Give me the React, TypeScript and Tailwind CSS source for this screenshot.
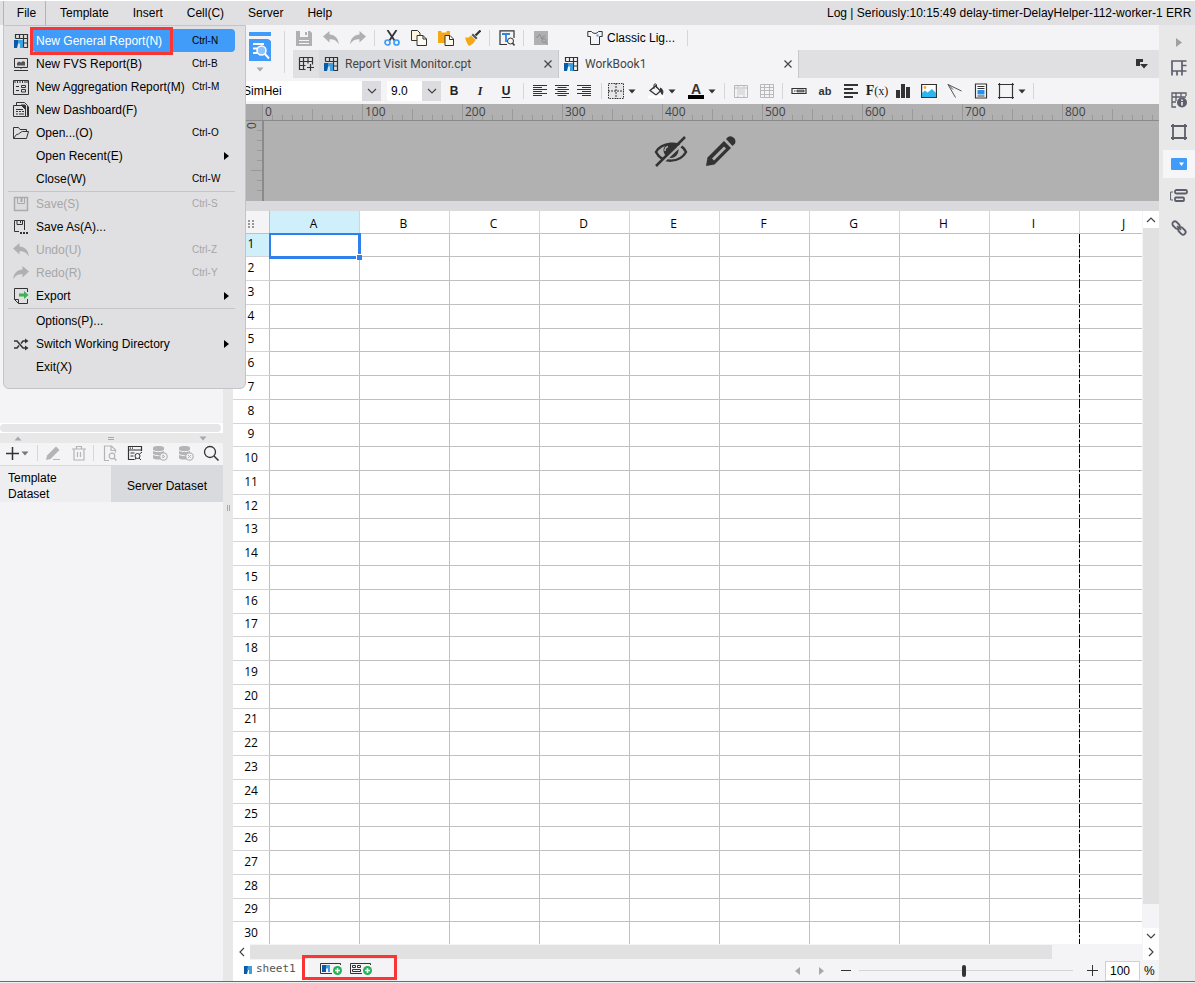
import { useState } from 'react';
import type { ReactNode } from 'react';

const Icon = ({ size = 16, className = '', children }: any) => (
  <svg
    width={size}
    height={size}
    viewBox="0 0 16 16"
    fill="none"
    stroke="#333"
    className={`shrink-0 ${className}`}
    aria-hidden="true"
  >
    {children}
  </svg>
);

/* ---------- shared icons ---------- */

const ReportIcon = () => (
  <Icon>
    <path d="M2.500 5.500v-4h12v13h-4M2.500 5.500h12M6.500 1.500v4M10.500 1.500v13M10.500 10h4" strokeWidth="1.200" />
    <path d="M1 7h4v4l-1 4H1z" fill="#0b5aa8" stroke="none" />
    <path d="M5 7h5v8H7v-4.500H5z" fill="#3aa0e0" stroke="none" />
  </Icon>
);

const SaveIcon = ({ color = '#b0b0b2' }: any) => (
  <Icon>
    <path d="M0 1h14l2 2v13H0z" fill={color} stroke="none" />
    <path d="M4 1h8v6H4z" fill="#f4f4f6" stroke="none" />
    <path d="M9 2h2v3H9z" fill={color} stroke="none" />
    <path d="M3 10.500h10M3 13.500h10" stroke="#f4f4f6" />
  </Icon>
);

const UndoIcon = () => (
  <Icon>
    <path d="M0 6.500 6.500 1v3.500c5 .3 9 3.500 9.300 10C13.500 10.500 11 9.300 6.500 9.300V12.500z" fill="#b0b0b2" stroke="none" />
  </Icon>
);

const RedoIcon = () => (
  <Icon>
    <path d="M16 6.500 9.500 1v3.500C4.500 4.800.5 8 .2 14.500 2.500 10.500 5 9.300 9.500 9.300V12.500z" fill="#b0b0b2" stroke="none" />
  </Icon>
);

const Caret = ({ className = 'text-[#333]' }: any) => (
  <svg width="8" height="5" viewBox="0 0 8 5" className={`shrink-0 ${className}`} aria-hidden="true">
    <path d="M.5.5h7L4 4.500z" fill="currentColor" />
  </svg>
);

const Chevron = ({ d }: { d: string }) => (
  <svg width="10" height="10" viewBox="0 0 10 10" fill="none" stroke="#444" strokeWidth="1.200" aria-hidden="true">
    <path d={d} />
  </svg>
);

const CHEVRON_DOWN = 'M1 3l4 4 4-4';
const CHEVRON_UP = 'M1 7l4-4 4 4';
const CHEVRON_LEFT = 'M7 1L3 5l4 4';
const CHEVRON_RIGHT = 'M3 1l4 4-4 4';

const Sep = ({ className = '' }: any) => (
  <div className={`w-px shrink-0 bg-[#d6d6da] ${className}`} />
);

const Tool = ({ label, className = 'w-[26px]', children }: any) => (
  <button type="button" aria-label={label} className={`flex h-full shrink-0 items-center justify-center ${className}`}>
    {children}
  </button>
);

/* ---------- menu ---------- */

type MenuEntry = {
  label?: string;
  keys?: string;
  icon?: ReactNode;
  sub?: boolean;
  disabled?: boolean;
  active?: boolean;
  line?: boolean;
};

const fileMenu: MenuEntry[] = [
  { label: 'New General Report(N)', keys: 'Ctrl-N', icon: <ReportIcon />, active: true },
  {
    label: 'New FVS Report(B)',
    keys: 'Ctrl-B',
    icon: (
      <Icon>
        <path d="M1.500 2.500h13v9h-13zM3 11.500c3-.5 4 0 5 .8 1-.8 2-1.300 5-.8M1 14.500h14" />
        <path d="M4 9.500V7l2-1.500 2 1L10 5l2 1v3.500z" fill="#555" stroke="none" />
      </Icon>
    ),
  },
  {
    label: 'New Aggregation Report(M)',
    keys: 'Ctrl-M',
    icon: (
      <Icon>
        <path d="M.5 1.500h15v14H.5z" />
        <path d="M2 1v3M4.500 1v3M7 1v3M9.500 1v3M12 1v3M14 1v3" />
        <path d="M3 7.500h3M3 11.500h3M8.500 6.500h4v2h-4zM8.500 10.500h4v2.500h-4z" />
      </Icon>
    ),
  },
  {
    label: 'New Dashboard(F)',
    icon: (
      <Icon>
        <path d="M3.500 3V.5h8l3 3v10H15M.5 3.500h12v11H.5zM13 14.500h2.500v-10" />
        <path d="M3 7.500h7M3 9.500h2M6 9.500h2M9 9.500h2M3 12h2M6 12h5" strokeWidth="1.200" />
        <path d="M8 3l4 4V3z" fill="#333" />
      </Icon>
    ),
  },
  {
    label: 'Open...(O)',
    keys: 'Ctrl-O',
    icon: (
      <Icon>
        <path d="M.5 13.500v-11h5l1.500 2h6.500v2M.5 13.500l3-4c3 0 4-3 6-3h6l-2 7z" />
      </Icon>
    ),
  },
  { label: 'Open Recent(E)', sub: true },
  { label: 'Close(W)', keys: 'Ctrl-W' },
  { line: true },
  {
    label: 'Save(S)',
    keys: 'Ctrl-S',
    disabled: true,
    icon: (
      <Icon>
        <path d="M1.500 1.500h13v13h-13z" fill="#dcdcde" stroke="#aaa" strokeWidth="1.500" />
        <path d="M4.500 2v5.500h7V2" stroke="#aaa" />
        <path d="M8.500 2v4" stroke="#aaa" strokeWidth="2" />
      </Icon>
    ),
  },
  {
    label: 'Save As(A)...',
    icon: (
      <Icon>
        <path d="M6 12.500H1.500v-11h10V11M4 1.500v4h5.500v-4M7.500 2v2" />
        <path d="M7 14h2M10 14h2M13 14h2" strokeWidth="2" />
      </Icon>
    ),
  },
  { label: 'Undo(U)', keys: 'Ctrl-Z', disabled: true, icon: <UndoIcon /> },
  { label: 'Redo(R)', keys: 'Ctrl-Y', disabled: true, icon: <RedoIcon /> },
  {
    label: 'Export',
    sub: true,
    icon: (
      <Icon>
        <path d="M14.500 4V.5h-13v11l4 4h9V11M1.500 11.500h4v4" />
        <path d="M6 5.500h5V3l4.500 4L11 11V8.500H6z" fill="#3cb05a" stroke="none" />
      </Icon>
    ),
  },
  { line: true },
  { label: 'Options(P)...' },
  {
    label: 'Switch Working Directory',
    sub: true,
    icon: (
      <Icon>
        <path d="M1 5h3l6 7h3M1 12h3l2-2.500M8 7.500L10 5h3" strokeWidth="1.500" />
        <path d="M12 2.500L15.500 5 12 7.500zM12 9.500l3.500 2.500-3.500 2.500z" fill="#333" stroke="none" />
      </Icon>
    ),
  },
  { label: 'Exit(X)' },
];

const FileMenu = () => (
  <div className="absolute top-[25px] left-[3px] z-20 h-[364px] w-[243px] rounded-b-md border border-[#c3c3c9] bg-[#e0e0e2] pt-[3px]">
    {fileMenu.map((item, index) =>
      item.line ? (
        <div key={index} className="mr-2.5 ml-1 h-0.5 border-b border-[#c6c6ca]" />
      ) : (
        <button
          key={index}
          type="button"
          disabled={item.disabled}
          className={`flex h-[23px] w-full items-center pr-2.5 text-left ${item.disabled ? 'text-[#a6a6a8]' : 'text-black'}`}
        >
          <span className="flex w-7 shrink-0 justify-end pr-[3px]">{item.icon}</span>
          <span
            className={`flex h-full grow items-center rounded-sm pl-1 whitespace-nowrap ${item.active ? 'bg-[#409bf9]' : ''}`}
          >
            <span className={`w-[156px] ${item.active ? 'text-white' : ''}`}>{item.label}</span>
            <span className="text-[10px]">{item.keys}</span>
            {item.sub && (
              <svg width="5" height="8" viewBox="0 0 5 8" className="mr-1.5 ml-auto" aria-hidden="true">
                <path d="M0 0l5 4-5 4z" fill="#000" />
              </svg>
            )}
          </span>
        </button>
      ),
    )}
    <div className="absolute top-px left-[26px] h-7 w-[143px] border-3 border-[#fb3434]" />
  </div>
);

const MenuBar = () => (
  <header className="relative flex h-[25px] shrink-0 items-stretch border-t border-white bg-[#e0e0e2] pl-[3px]">
    <button type="button" className="mr-0.5 w-[43px] border-x border-[#b4b4b8] pl-1">
      File
    </button>
    {['Template', 'Insert', 'Cell(C)', 'Server', 'Help'].map((item) => (
      <button key={item} type="button" className="px-3">
        {item}
      </button>
    ))}
    <p className="ml-auto flex w-[368px] items-center whitespace-nowrap">
      Log | Seriously:10:15:49 delay-timer-DelayHelper-112-worker-1 ERR
    </p>
  </header>
);

/* ---------- main toolbar and file tabs ---------- */

const PreviewButton = () => (
  <div className="flex w-[290px] shrink-0 justify-end">
    <button type="button" aria-label="Preview" className="flex w-9 flex-col items-center gap-1.5 pt-[7px]">
      <svg width="22" height="29" viewBox="0 0 22 29" fill="none" aria-hidden="true">
        <path d="M0 0h22v4H0zM0 7h19l3 2v20H0z" fill="#409bf9" />
        <path d="M4 12h11M4 16.500h5M4 21h4" stroke="#fff" strokeWidth="1.800" />
        <circle cx="12.500" cy="18.500" r="4.500" fill="#8cc4ff" stroke="#fff" strokeWidth="1.500" />
        <path d="M16 22l4 4.500" stroke="#fff" strokeWidth="2" />
      </svg>
      <Caret className="text-[#a8a8ac]" />
    </button>
    <Sep className="mt-1.5 mr-[5px] ml-1.5 h-[42px]" />
  </div>
);

const MainToolbar = () => (
  <div className="flex h-[25px] items-center">
    <Tool label="Save" className="w-[27px]">
      <SaveIcon />
    </Tool>
    <Tool label="Undo" className="w-[27px]">
      <UndoIcon />
    </Tool>
    <Tool label="Redo" className="w-[27px]">
      <RedoIcon />
    </Tool>
    <Sep className="mx-[3px] h-4" />
    <Tool label="Cut" className="w-[27px]">
      <Icon>
        <path d="M3.500 0l7 10.500M12.500 0l-7 10.500" strokeWidth="1.800" />
        <circle cx="3.500" cy="12.500" r="2.500" stroke="#409bf9" strokeWidth="1.700" />
        <circle cx="12.500" cy="12.500" r="2.500" stroke="#409bf9" strokeWidth="1.700" />
      </Icon>
    </Tool>
    <Tool label="Copy" className="w-[27px]">
      <Icon>
        <path d="M.5 10.500V.5h6l2.500 2.500v7.500z" fill="#fff6e0" />
        <path d="M6 15.500v-10h6l3.500 3.500v6.500z" fill="#fffaf0" />
        <path d="M12 5.500v3.500h3.500" />
      </Icon>
    </Tool>
    <Tool label="Paste" className="w-[27px]">
      <Icon>
        <path d="M0 1h12v12H0z" fill="#f5a815" stroke="none" />
        <path d="M3.500 1.500h5" stroke="#fff" strokeWidth="2" />
        <path d="M7 15.500v-10h5l3.500 3.500v6.500z" fill="#fffaf0" />
        <path d="M11.500 5.500v4h4" />
      </Icon>
    </Tool>
    <Tool label="Format painter" className="w-[27px]">
      <Icon>
        <path d="M0 7.500c3 .5 5-.5 6-2l4.500 4.500c-1.500 3-3.500 5-6.500 6C2 14 1 11 0 7.500z" fill="#f5a815" stroke="none" />
        <path d="M6.500 5l4.500 4.500 1.500-1.500L8 3.500z" fill="#555" stroke="none" />
        <path d="M10.500 5.500l5-5" strokeWidth="2.200" />
      </Icon>
    </Tool>
    <Sep className="mx-[3px] h-4" />
    <Tool label="Find" className="w-[27px]">
      <Icon>
        <path d="M8 14.500H1V.8h14V8" strokeWidth="1.200" />
        <path d="M3 4h8M7 4v8" stroke="#2f86e0" strokeWidth="1.800" />
        <circle cx="11.500" cy="11" r="3" />
        <path d="M13.500 13l2 2.500" strokeWidth="1.500" />
      </Icon>
    </Tool>
    <Sep className="mx-[3px] h-4" />
    <Tool label="Template check" className="w-[27px]">
      <Icon>
        <path d="M1 1h14v14H1z" fill="#b0b0b2" stroke="none" />
        <path d="M3 7h2l1.500-3L9 9l1.500-3h2" stroke="#8e8e90" />
        <circle cx="11" cy="10.500" r="2" stroke="#8e8e90" />
        <path d="M12.500 12l2 2.500" stroke="#8e8e90" />
      </Icon>
    </Tool>
    <button type="button" className="ml-[33px] flex items-center gap-1 whitespace-nowrap">
      <Icon>
        <path d="M4.500 1.500H.8v5h2.700v8h9v-8h2.700v-5h-3.700c-1.500 2.500-5.500 2.500-7 0z" />
        <path d="M9.500 5.500h2" stroke="#409bf9" strokeWidth="2" />
      </Icon>
      Classic Lig...
    </button>
    <Sep className="ml-3 h-4" />
  </div>
);

const FileTab = ({ name, active = false }: any) => (
  <div
    className={`flex w-60 items-center gap-1 border-r border-[#c9c9cd] pr-1.5 pl-1 ${active ? 'bg-[#f4f4f6]' : 'bg-[#d9dade]'}`}
  >
    <button
      type="button"
      className="flex grow items-center gap-1.5 text-left font-['Roboto',sans-serif] text-xs text-[#444]"
    >
      <ReportIcon />
      {name}
    </button>
    <button type="button" aria-label={`Close ${name}`}>
      <svg width="8" height="8" viewBox="0 0 8 8" stroke="#444" strokeWidth="1.200" aria-hidden="true">
        <path d="M.5.5l7 7M7.500.5l-7 7" />
      </svg>
    </button>
  </div>
);

const FileTabs = () => (
  <div className="ml-[3px] flex h-7 bg-[#e0e0e2]">
    <Tool label="New template">
      <Icon>
        <path d="M1.500 1.500h13v7M1.500 1.500v12h6M1.500 5.500h13M5.500 1.500v12M10 1.500v6M1.500 9.500h6M9 11.500h7M12.500 8v7" strokeWidth="1.200" />
      </Icon>
    </Tool>
    <FileTab name="Report Visit Monitor.cpt" />
    <FileTab name="WorkBook1" active />
    <Tool label="Tab list" className="mr-1 ml-auto w-[26px]">
      <svg width="12" height="10" viewBox="0 0 12 10" fill="#333" aria-hidden="true">
        <path d="M0 0h7v3H4v4H0zM4 5h8L8 9.500z" />
      </svg>
    </Tool>
  </div>
);

/* ---------- format bar ---------- */

const Combo = ({ label, value, className }: any) => (
  <div className={`relative flex h-5 bg-white ${className}`}>
    <select aria-label={label} className="w-full appearance-none bg-transparent outline-none" defaultValue={value}>
      <option>{value}</option>
    </select>
    <span className="pointer-events-none absolute inset-y-0 right-0 flex w-[19px] items-center justify-center bg-[#dcdce0]">
      <Chevron d={CHEVRON_DOWN} />
    </span>
  </div>
);

const AlignIcon = ({ d }: { d: string }) => (
  <Icon>
    <path d={d} />
  </Icon>
);

const WithCaret = ({ label, children }: any) => (
  <button type="button" aria-label={label} className="flex h-full w-8 shrink-0 items-center">
    <span className="flex w-6 justify-center">{children}</span>
    <Caret />
  </button>
);

const FormatBar = () => (
  <div className="flex h-[26px] shrink-0 items-center bg-[#f4f4f6]">
    <Combo label="Font" value="SimHei" className="w-[148px] [&_select]:pl-2.5" />
    <Combo label="Font size" value="9.0" className="ml-1.5 w-[54px] [&_select]:pl-1" />
    <Tool label="Bold">
      <b className="text-[#222]">B</b>
    </Tool>
    <Tool label="Italic">
      <b className="font-['Liberation_Serif',serif] text-[#222] italic">I</b>
    </Tool>
    <Tool label="Underline">
      <b className="text-[#222] underline underline-offset-2">U</b>
    </Tool>
    <Sep className="mr-[5px] ml-1 h-4" />
    <Tool label="Align left" className="w-[22px]">
      <AlignIcon d="M1 2.500h14M1 4.500h9M1 6.500h14M1 8.500h9M1 10.500h14M1 12.500h9" />
    </Tool>
    <Tool label="Align center" className="w-[22px]">
      <AlignIcon d="M1 2.500h14M3.500 4.500h9M1 6.500h14M3.500 8.500h9M1 10.500h14M3.500 12.500h9" />
    </Tool>
    <Tool label="Align right" className="w-[22px]">
      <AlignIcon d="M1 2.500h14M6 4.500h9M1 6.500h14M6 8.500h9M1 10.500h14M6 12.500h9" />
    </Tool>
    <Sep className="mr-0.5 ml-1.5 h-4" />
    <div className="flex h-full gap-2">
      <WithCaret label="Border">
        <Icon>
          <path d="M.5.5h15v15H.5z" fill="#e6e6e8" strokeDasharray="1.500 1" />
          <path d="M8 0v16M0 8h16" strokeDasharray="2 1" />
        </Icon>
      </WithCaret>
      <WithCaret label="Fill colour">
        <Icon>
          <path d="M2 7.500L7.500 3l5 5L8 12z" strokeWidth="1.300" />
          <path d="M6 6V2c0-1.500 2.500-1.500 2.500 0v3" />
          <path d="M12.500 5c2.500 1.500 3 4 1.800 6.500-.8-1-1.300-2-1.800-3.500z" fill="#333" />
          <path d="M0 14h16" stroke="#fff" strokeWidth="3" />
        </Icon>
      </WithCaret>
      <WithCaret label="Font colour">
        <span className="w-4 border-b-4 border-black text-sm leading-3 font-bold text-[#333]">A</span>
      </WithCaret>
    </div>
    <Sep className="mr-[3px] ml-2 h-4" />
    <Tool label="Merge cells">
      <Icon>
        <path d="M1.500 2.500h13v12h-13zM1.500 5h13M5 2.500V4M11 2.500V4M5 14v-1.500M11 14v-1.500" stroke="#b8b8bc" />
        <path d="M4 6h8v6H4z" fill="#dedee0" stroke="none" />
      </Icon>
    </Tool>
    <Tool label="Unmerge cells">
      <Icon>
        <path d="M1.500 1.500h13v13h-13zM1.500 4.500h13M1.500 7.500h13M1.500 11.500h13M5.500 1.500v13M10.500 1.500v13" stroke="#b8b8bc" />
      </Icon>
    </Tool>
    <Sep className="mr-[3px] ml-0.5 h-4" />
    <Tool label="Cell element">
      <Icon>
        <path d="M1 5.500h14v5H1z" strokeWidth="1.200" />
        <path d="M3 8h1.500M6 7.200h7v1.600H6z" />
      </Icon>
    </Tool>
    <Tool label="Text">
      <span className="text-[11px] font-bold text-[#333]">ab</span>
    </Tool>
    <Tool label="Rich text">
      <Icon>
        <path d="M1 2h14M1 6h9M1 10h14M1 14h9" strokeWidth="2" />
      </Icon>
    </Tool>
    <Tool label="Formula">
      <span className="font-['Liberation_Serif',serif] text-[#222]">
        <b className="text-sm">F</b>(x)
      </span>
    </Tool>
    <Tool label="Chart">
      <Icon>
        <path d="M1 7h4v8H1zM6 1h4v14H6zM11 4h4v11h-4z" fill="#333" stroke="none" />
      </Icon>
    </Tool>
    <Tool label="Image">
      <Icon>
        <path d="M.6 1.500h14.800v13H.6z" fill="#fff" strokeWidth="1.200" />
        <path d="M1 14v-4l3-2.500 2.500 2L11 6l4 4v4z" fill="#2fb5ee" stroke="none" />
        <circle cx="4" cy="4.500" r="1.400" fill="#f7a93b" stroke="none" />
      </Icon>
    </Tool>
    <Tool label="Slope line">
      <Icon>
        <path d="M1 1.500l13.500 6.500M1 1.500l7.500 13M1 1.500l5 5" stroke="#555" />
      </Icon>
    </Tool>
    <Tool label="Sub report">
      <Icon>
        <path d="M2.500 1h11v14h-11z" fill="#fff" strokeWidth="1.200" />
        <path d="M4.500 3.500h7M4.500 5.500h7M4.500 13h7" />
        <path d="M4.500 7h7v4.500h-7z" fill="#2b8fe6" stroke="none" />
      </Icon>
    </Tool>
    <WithCaret label="Float element">
      <Icon>
        <path d="M1.500 0v16M14.500 0v16M0 1.500h16M0 14.500h16" strokeWidth="1.200" />
      </Icon>
    </WithCaret>
    <Sep className="ml-[7px] h-4" />
  </div>
);

/* ---------- parameter pane ---------- */

const tickClass = (i: number) => {
  if (i === 0) return 'h-4';
  return i === 5 ? 'h-[11px]' : 'h-[5px]';
};

const Ruler = () => (
  <div className="flex h-[17px] shrink-0 overflow-hidden border-b border-[#8a8a8a] bg-[#b1b1b1]">
    <div className="w-[29px] shrink-0 bg-[#a9a9a9]" />
    {[0, 100, 200, 300, 400, 500, 600, 700, 800].map((value) => (
      <div key={value} className="relative flex w-[100px] shrink-0 items-end">
        {[0, 1, 2, 3, 4, 5, 6, 7, 8, 9].map((i) => (
          <div key={i} className={`w-2.5 border-l border-[#999] ${tickClass(i)}`} />
        ))}
        <span className="absolute top-0.5 left-[3px] font-['Open_Sans',sans-serif] text-xs leading-3 text-[#444]">
          {value}
        </span>
      </div>
    ))}
  </div>
);

const ParameterPane = () => (
  <div className="flex h-20 shrink-0 bg-[#b1b1b1]">
    <div className="flex w-[31px] flex-col items-end border-r-2 border-[#8a8a8a]">
      <span className="mr-1.5 size-[9px] -rotate-90 text-center font-['Open_Sans',sans-serif] text-xs leading-[9px] text-[#444]">
        0
      </span>
      {[1, 2, 3, 4, 5, 6, 7].map((i) => (
        <div key={i} className={`h-2.5 shrink-0 border-t border-[#999] ${i === 5 ? 'w-[11px]' : 'w-[5px]'}`} />
      ))}
    </div>
    <div className="flex grow justify-center gap-4 pt-3 pr-8">
      <button type="button" aria-label="Hide parameter pane" className="h-9">
        <svg width="34" height="34" viewBox="0 0 34 34" fill="none" aria-hidden="true">
          <path d="M2 18c5-9 24-13 30 0-6 11-24 12-30 0z" stroke="#333" strokeWidth="2.500" />
          <circle cx="17" cy="16.500" r="7.500" fill="#333" />
          <path d="M11 17c0-2 1-4 3-4.500" stroke="#b1b1b1" strokeWidth="1.500" />
          <path d="M3.500 33L33.500 5" stroke="#b1b1b1" strokeWidth="2.500" />
          <path d="M2 32L31 3" stroke="#333" strokeWidth="2.500" />
        </svg>
      </button>
      <button type="button" aria-label="Edit parameter pane" className="h-9">
        <svg width="34" height="34" viewBox="0 0 34 34" fill="#333" aria-hidden="true">
          <path d="M2 32l1.500-8.500L20 7l7 7L10.500 30.500z" />
          <path d="M22 5l2-2c4-2.500 9 2.500 7 6.500l-2.500 2.500z" />
          <path d="M8 24.500L20 12.500l2 2L10 26.500z" fill="#b1b1b1" />
        </svg>
      </button>
    </div>
  </div>
);

/* ---------- sheet ---------- */

const columns = ['A', 'B', 'C', 'D', 'E', 'F', 'G', 'H', 'I', 'J'];
const rows = Array.from({ length: 30 }, (_, i) => i + 1);

const Sheet = () => (
  <div className="flex min-h-0 grow">
    <div className="relative grow overflow-hidden bg-white">
      <table className="w-[937px] table-fixed border-separate border-spacing-0 font-['Open_Sans',sans-serif] text-xs leading-4 text-black">
        <thead>
          <tr className="h-[23px]">
            <th className="w-[37px] border-r border-b border-[#c0c0c0] bg-[#f4f4f6] p-0">
              <svg width="7" height="9" viewBox="0 0 7 9" fill="#999" className="mx-auto mt-1" aria-hidden="true">
                <path d="M0 0h2v2H0zM4 0h2v2H4zM0 3h2v2H0zM4 3h2v2H4zM0 6h2v2H0zM4 6h2v2H4z" />
              </svg>
            </th>
            {columns.map((col) => (
              <th
                key={col}
                scope="col"
                className={`w-[90px] border-r border-b border-r-[#d4d4d6] border-b-[#c0c0c0] p-0 pt-[3px] pr-0.5 font-normal ${col === 'A' ? 'bg-[#cff0fb]' : 'bg-white'}`}
              >
                {col}
              </th>
            ))}
          </tr>
        </thead>
        <tbody>
          {rows.map((row) => (
            <tr key={row} className={row % 4 === 1 ? 'h-[23px]' : 'h-6'}>
              <th
                scope="row"
                className={`border-r border-b border-r-[#c0c0c0] border-b-[#d4d4d6] p-0 pb-0.5 font-normal ${row === 1 ? 'bg-[#cff0fb]' : ''}`}
              >
                {row}
              </th>
              {columns.map((col) => (
                <td key={col} className="border-r border-b border-[#c0c0c0] p-0" />
              ))}
            </tr>
          ))}
        </tbody>
      </table>
      {/* page break */}
      <div className="absolute top-[23px] bottom-0 left-[846px] w-px bg-[repeating-linear-gradient(#000_0_9px,#ccc_9px_11px,#000_11px_13px,#ccc_13px_15px)]" />
      {/* selected cell */}
      <div className="absolute top-[22px] left-9 h-[26px] w-[92px] border-2 border-r-3 border-b-3 border-[#2f80ed]">
        <span className="absolute -right-1 -bottom-1 size-1.5 border-t border-l border-white bg-[#2f80ed]" />
      </div>
    </div>
    <div className="flex w-[17px] shrink-0 flex-col bg-[#f4f4f6] pl-px">
      <button type="button" aria-label="Scroll up" className="flex h-[17px] items-center justify-center bg-white">
        <Chevron d={CHEVRON_UP} />
      </button>
      <div className="grow bg-[#e1e1e1]" />
      <div className="h-6" />
      <button type="button" aria-label="Scroll down" className="flex h-4 items-center justify-center bg-white">
        <Chevron d={CHEVRON_DOWN} />
      </button>
    </div>
  </div>
);

const HorizontalScroll = () => (
  <div className="flex h-4 shrink-0 bg-[#f4f4f6]">
    <button type="button" aria-label="Scroll left" className="flex w-[17px] items-center justify-center bg-white">
      <Chevron d={CHEVRON_LEFT} />
    </button>
    <div className="my-px grow bg-[#e1e1e1]" />
    <div className="w-[91px]" />
    <button type="button" aria-label="Scroll right" className="flex w-4 items-center justify-center bg-white">
      <Chevron d={CHEVRON_RIGHT} />
    </button>
  </div>
);

const AddBadge = () => (
  <>
    <circle cx="17.500" cy="8.500" r="4.500" fill="#22b455" />
    <path d="M15 8.500h5M17.500 6v5" stroke="#fff" strokeWidth="1.500" />
  </>
);

const StatusBar = () => {
  const [zoom, setZoom] = useState(49);

  return (
    <div className="flex h-[21px] shrink-0 items-center bg-[#f4f4f6]">
      <button
        type="button"
        className="flex h-full w-[75px] items-center gap-1 bg-white pb-0.5 pl-[11px] font-['DejaVu_Sans_Mono',monospace] text-[11px] text-[#555]"
      >
        <svg width="8" height="8" viewBox="0 0 8 8" className="shrink-0" aria-hidden="true">
          <path d="M0 0h4v4l-1 4H0z" fill="#0b5aa8" />
          <path d="M4 0h4v8H5V4H3z" fill="#3aa0e0" />
        </svg>
        sheet1
      </button>
      <div className="relative flex h-full items-center gap-2 pb-1 pl-3">
        <button type="button" aria-label="Add report sheet">
          <svg width="22" height="13" viewBox="0 0 22 13" fill="none" aria-hidden="true">
            <path d="M12 11.500H.5v-10h20V3" stroke="#333" />
            <path d="M2 3h4v7H2z" fill="#0b5aa8" />
            <path d="M6 3h4v7H8V6.500H6z" fill="#3aa0e0" />
            <AddBadge />
          </svg>
        </button>
        <button type="button" aria-label="Add form sheet">
          <svg width="22" height="13" viewBox="0 0 22 13" fill="none" aria-hidden="true">
            <path d="M12 11.500H.5v-10h20V3" stroke="#333" />
            <path d="M2.500 3.500h3v2h-3zM7.500 3.500h3v2h-3zM2.500 7.500h8v2h-8z" stroke="#333" />
            <AddBadge />
          </svg>
        </button>
        <div className="pointer-events-none absolute -top-[5px] -left-1.5 h-[25px] w-[95px] border-3 border-[#fb3434]" />
      </div>
      <div className="ml-auto flex h-full items-center">
        <button type="button" aria-label="Previous sheet" className="w-6">
          <svg width="5" height="8" viewBox="0 0 5 8" aria-hidden="true">
            <path d="M5 0L0 4l5 4z" fill="#a8a8ac" />
          </svg>
        </button>
        <button type="button" aria-label="Next sheet" className="w-[22px]">
          <svg width="5" height="8" viewBox="0 0 5 8" aria-hidden="true">
            <path d="M0 0l5 4-5 4z" fill="#a8a8ac" />
          </svg>
        </button>
        <button type="button" aria-label="Zoom out" className="flex w-[18px] items-center">
          <span className="h-px w-2.5 bg-[#333]" />
        </button>
        <input
          type="range"
          aria-label="Zoom"
          value={zoom}
          onChange={(e) => setZoom(Number(e.target.value))}
          className="h-3 w-[214px] appearance-none bg-[linear-gradient(#d4d4d6,#d4d4d6)] bg-[length:100%_1px] bg-center bg-no-repeat [&::-webkit-slider-thumb]:h-3 [&::-webkit-slider-thumb]:w-1 [&::-webkit-slider-thumb]:appearance-none [&::-webkit-slider-thumb]:rounded-xs [&::-webkit-slider-thumb]:bg-[#333]"
        />
        <button type="button" aria-label="Zoom in" className="mr-[7px] ml-3.5">
          <svg width="11" height="11" viewBox="0 0 11 11" stroke="#333" aria-hidden="true">
            <path d="M0 5.500h11M5.500 0v11" />
          </svg>
        </button>
        <input
          aria-label="Zoom percent"
          defaultValue="100"
          className="h-5 w-[35px] border border-[#d0d0d4] bg-white pl-1 text-black outline-none"
        />
        <span className="w-[19px] pl-1">%</span>
      </div>
    </div>
  );
};

/* ---------- left panel ---------- */

const DatasetPanel = () => (
  <aside className="flex w-[223px] shrink-0 flex-col bg-[#f4f4f6]">
    <div className="h-[345px]" />
    <div className="h-2.5 bg-white py-px pr-0.5">
      <div className="h-full rounded-full bg-[#e6e6e8]" />
    </div>
    <div className="flex h-[10px] items-center justify-between bg-[#e8e8e8] pr-4 pl-3.5">
      <Caret className="rotate-180 text-[#a8a8ac]" />
      <span className="h-[3px] w-1.5 border-y border-[#a8a8ac]" />
      <Caret className="text-[#a8a8ac]" />
    </div>
    <div className="flex h-[22px] items-center pb-0.5">
      <button type="button" aria-label="Add dataset" className="flex h-full w-[37px] shrink-0 items-center gap-0.5 pl-1.5">
        <svg width="13" height="13" viewBox="0 0 13 13" stroke="#333" strokeWidth="1.500" aria-hidden="true">
          <path d="M0 6.500h13M6.500 0v13" />
        </svg>
        <Caret className="text-[#777]" />
      </button>
      <Sep className="mr-0.5 h-4" />
      <Tool label="Edit">
        <Icon>
          <path d="M1 15l1-4.500L11 1.500 14.500 5l-9 9z" fill="#b4b4b8" stroke="none" />
          <path d="M8 14.500h7" stroke="#b4b4b8" />
        </Icon>
      </Tool>
      <Tool label="Delete" className="w-[25px]">
        <Icon>
          <path d="M1 4h14M3 4v11h10V4M5.500 3.500v-2h5v2M6.500 7v5M9.500 7v5" stroke="#b4b4b8" strokeWidth="1.200" />
        </Icon>
      </Tool>
      <Sep className="mr-[3px] ml-0.5 h-4" />
      <Tool label="Preview" className="w-[25px]">
        <Icon>
          <path d="M7 15.500H2.500V1h7l4 4v2.500M9 1v4.500h4" stroke="#b4b4b8" strokeWidth="1.200" />
          <circle cx="10" cy="11" r="2.800" stroke="#b4b4b8" strokeWidth="1.200" />
          <path d="M12 13l2.500 2.500" stroke="#b4b4b8" strokeWidth="1.500" />
        </Icon>
      </Tool>
      <Tool label="Dataset connection" className="w-[25px]">
        <Icon>
          <path d="M7 14.500H1.500v-13h13V6M1.500 5h13M3 3.200h1M5 3.200h1M3.500 8h4M3.500 11h3" strokeWidth="1.200" />
          <circle cx="10.500" cy="11" r="2.500" />
          <path d="M12.500 9l2.500-2M9 13l-1.500 2M12 13l2 2" />
        </Icon>
      </Tool>
      {['Enable cache', 'Disable cache'].map((label) => (
        <Tool key={label} label={label} className="w-[26px]">
          <Icon>
            <path d="M1 2.500C1 .5 12 .5 12 2.500V13c0 2-11 2-11 0z" fill="#b4b4b8" stroke="none" />
            <path d="M1 5.500c2 1.500 9 1.500 11 0M1 9.500c2 1.500 9 1.500 11 0" stroke="#f4f4f6" />
            <circle cx="11.500" cy="11.500" r="3.700" fill="#f4f4f6" stroke="#b4b4b8" strokeWidth="1.200" />
            <path
              d={label === 'Enable cache' ? 'M10.800 10l2 1.500-2 1.500z' : 'M10 10l3 3M13 10l-3 3'}
              stroke="#b4b4b8"
            />
          </Icon>
        </Tool>
      ))}
      <Tool label="Search" className="w-6">
        <Icon>
          <circle cx="7" cy="7" r="5.500" strokeWidth="1.300" />
          <path d="M11 11l4.500 4.500" strokeWidth="1.500" />
        </Icon>
      </Tool>
    </div>
    <div className="flex h-[37px] items-stretch border-t border-[#d9dade] text-left text-black">
      <button type="button" className="w-[111px] bg-[#eeeef0] pt-1 pr-10 pl-2 text-left leading-4">
        Template Dataset
      </button>
      <button type="button" className="grow bg-[#d9dade] pt-1 whitespace-nowrap">
        Server Dataset
      </button>
    </div>
  </aside>
);

/* ---------- right rail ---------- */

const RailButton = ({ label, active = false, children }: any) => (
  <button type="button" aria-label={label} className="flex h-8 w-full items-center pl-1">
    <span className={`flex h-7 grow items-center justify-center ${active ? 'bg-[#f6f6f8]' : ''}`}>{children}</span>
  </button>
);

const Rail = () => (
  <nav className="flex w-9 shrink-0 flex-col bg-[#e8e8e8]">
    <button type="button" aria-label="Collapse" className="flex h-[27px] items-center justify-center pt-2 pl-1">
      <svg width="6" height="9" viewBox="0 0 6 9" aria-hidden="true">
        <path d="M0 0l6 4.500L0 9z" fill="#a0a0a4" />
      </svg>
    </button>
    <RailButton label="Cell element">
      <Icon>
        <path d="M1 15.500V1h14.500M1 11h10V1M11 5.500h4.500M11 11h4.500M6 11v4.500M11 11v4.500" stroke="#5c5f6b" strokeWidth="1.700" />
      </Icon>
    </RailButton>
    <RailButton label="Cell attributes">
      <Icon>
        <path d="M5 15H1V1h14v3M1 5h14M5 1v8M10 1v4M1 10h4" stroke="#5c5f6b" strokeWidth="1.300" />
        <circle cx="11" cy="10.500" r="5" fill="#5c5f6b" stroke="none" />
        <path d="M11 7.500v1.500M11 10v3.500" stroke="#fff" strokeWidth="1.500" />
      </Icon>
    </RailButton>
    <RailButton label="Float element">
      <Icon>
        <path d="M2 0v16M14 0v16M0 2h16M0 14h16" stroke="#5c5f6b" strokeWidth="1.800" />
      </Icon>
    </RailButton>
    <RailButton label="Widget settings" active>
      <Icon>
        <rect y="2" width="16" height="12" rx="1" fill="#409bf9" stroke="none" />
        <path d="M8 6.500h5L10.500 10z" fill="#fff" stroke="none" />
      </Icon>
    </RailButton>
    <RailButton label="Condition attributes">
      <svg width="18" height="14" viewBox="0 0 18 14" fill="none" stroke="#5c5f6b" aria-hidden="true">
        <path d="M3 3H.6v8H3" />
        <rect x="5" y="1" width="12" height="3.500" rx="1.500" strokeWidth="1.800" />
        <rect x="5" y="8.500" width="9" height="3.500" rx="1" strokeWidth="1.800" />
      </svg>
    </RailButton>
    <RailButton label="Hyperlink">
      <Icon>
        <rect x="1" y="2.500" width="8" height="5" rx="2.500" stroke="#5c5f6b" strokeWidth="1.900" transform="rotate(45 5 5)" />
        <rect x="7" y="8.500" width="8" height="5" rx="2.500" stroke="#5c5f6b" strokeWidth="1.900" transform="rotate(45 11 11)" />
        <path d="M6 6l4 4" stroke="#5c5f6b" strokeWidth="1.600" />
      </Icon>
    </RailButton>
  </nav>
);

export default function App() {
  return (
    <div className="relative flex h-screen flex-col overflow-hidden bg-[#f0f0f0] pb-px font-['Liberation_Sans',Arial,sans-serif] text-xs text-black">
      <MenuBar />
      <FileMenu />
      <div className="flex min-h-0 grow border-b border-[#6b6b6b]">
        <div className="flex min-w-0 grow flex-col">
          <div className="flex h-[53px] shrink-0 bg-[#f4f4f6]">
            <PreviewButton />
            <div className="min-w-0 grow">
              <MainToolbar />
              <FileTabs />
            </div>
          </div>
          <div className="flex min-h-0 grow">
            <DatasetPanel />
            <div className="flex w-2.5 shrink-0 justify-center bg-[#e8e8e8] pt-[427px]">
              <span className="h-1.5 w-[3px] border-x border-[#a8a8ac]" />
            </div>
            <main className="flex min-w-0 grow flex-col">
              <FormatBar />
              <Ruler />
              <ParameterPane />
              <div className="h-2.5 shrink-0 bg-[#dadadc]" />
              <Sheet />
              <HorizontalScroll />
              <StatusBar />
            </main>
          </div>
        </div>
        <Rail />
      </div>
    </div>
  );
}
